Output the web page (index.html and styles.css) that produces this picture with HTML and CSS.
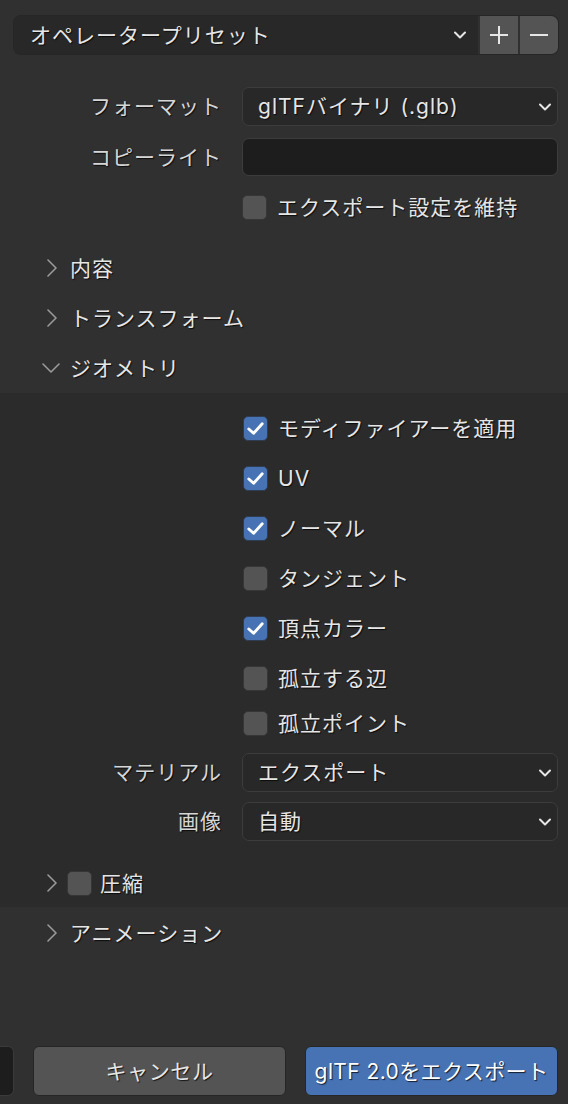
FILE: index.html
```html
<!DOCTYPE html>
<html lang="ja">
<head>
  <meta charset="UTF-8">
  <title>glTF 2.0 エクスポート</title>
  <link rel="stylesheet" href="styles.css">
</head>
<body>

<div class="preset">
  <div class="preset-select">
    <span>オペレータープリセット</span>
    <svg class="chev-down" width="12" height="8" viewBox="0 0 12 8"><polyline points="1,1.5 6,6.5 11,1.5"/></svg>
  </div>
  <div class="preset-btn">
    <svg width="20" height="20" viewBox="0 0 20 20"><line x1="10" y1="1" x2="10" y2="19"/><line x1="1" y1="10" x2="19" y2="10"/></svg>
  </div>
  <div class="preset-btn last">
    <svg width="20" height="20" viewBox="0 0 20 20"><line x1="1" y1="10" x2="19" y2="10"/></svg>
  </div>
</div>

<div class="props">
  <div class="prop">
    <span class="prop-label">フォーマット</span>
    <div class="select">
      <span>glTFバイナリ (.glb)</span>
      <svg class="chev-down" width="12" height="8" viewBox="0 0 12 8"><polyline points="1,1.5 6,6.5 11,1.5"/></svg>
    </div>
  </div>
  <div class="prop">
    <span class="prop-label">コピーライト</span>
    <div class="textfield"></div>
  </div>
  <div class="check-row">
    <span class="box"></span>
    <span>エクスポート設定を維持</span>
  </div>
</div>

<div class="header">
  <svg class="chev-right" width="10" height="18" viewBox="0 0 10 18"><polyline points="1,1 9,9 1,17"/></svg>
  <span>内容</span>
</div>
<div class="header">
  <svg class="chev-right" width="10" height="18" viewBox="0 0 10 18"><polyline points="1,1 9,9 1,17"/></svg>
  <span>トランスフォーム</span>
</div>
<div class="header open">
  <svg class="chev-open" width="18" height="10" viewBox="0 0 18 10"><polyline points="1,1 9,9 17,1"/></svg>
  <span>ジオメトリ</span>
</div>

<div class="subpanel">
  <div class="check-row geo">
    <span class="box on"><svg viewBox="0 0 24 24"><polyline points="5,12.5 10,17 19,7"/></svg></span>
    <span>モディファイアーを適用</span>
  </div>
  <div class="check-row geo">
    <span class="box on"><svg viewBox="0 0 24 24"><polyline points="5,12.5 10,17 19,7"/></svg></span>
    <span>UV</span>
  </div>
  <div class="check-row geo">
    <span class="box on"><svg viewBox="0 0 24 24"><polyline points="5,12.5 10,17 19,7"/></svg></span>
    <span>ノーマル</span>
  </div>
  <div class="check-row geo">
    <span class="box"></span>
    <span>タンジェント</span>
  </div>
  <div class="check-row geo">
    <span class="box on"><svg viewBox="0 0 24 24"><polyline points="5,12.5 10,17 19,7"/></svg></span>
    <span>頂点カラー</span>
  </div>
  <div class="check-row geo">
    <span class="box"></span>
    <span>孤立する辺</span>
  </div>
  <div class="check-row geo short">
    <span class="box"></span>
    <span>孤立ポイント</span>
  </div>

  <div class="prop tight">
    <span class="prop-label">マテリアル</span>
    <div class="select">
      <span>エクスポート</span>
      <svg class="chev-down" width="12" height="8" viewBox="0 0 12 8"><polyline points="1,1.5 6,6.5 11,1.5"/></svg>
    </div>
  </div>
  <div class="prop tight">
    <span class="prop-label">画像</span>
    <div class="select">
      <span>自動</span>
      <svg class="chev-down" width="12" height="8" viewBox="0 0 12 8"><polyline points="1,1.5 6,6.5 11,1.5"/></svg>
    </div>
  </div>

  <div class="header sub">
    <svg class="chev-right" width="10" height="18" viewBox="0 0 10 18"><polyline points="1,1 9,9 1,17"/></svg>
    <span class="box"></span>
    <span>圧縮</span>
  </div>
</div>

<div class="header anim">
  <svg class="chev-right" width="10" height="18" viewBox="0 0 10 18"><polyline points="1,1 9,9 1,17"/></svg>
  <span>アニメーション</span>
</div>

<div class="footer">
  <div class="btn stub"></div>
  <div class="btn">キャンセル</div>
  <div class="btn primary">glTF 2.0をエクスポート</div>
</div>

</body>
</html>
```

FILE: styles.css
```css
body {
  margin: 0;
  min-height: 100vh;
  display: flex;
  flex-direction: column;
  background-color: #303030;
  color: #e6e6e6;
  font-family: "Inter", "Noto Sans CJK JP", sans-serif;
  font-size: 21px;
  letter-spacing: 1px;
  line-height: 1;
  text-shadow: 1px 1px 1px rgba(0,0,0,0.75);
}
svg {
  fill: none;
  stroke-linecap: round;
  stroke-linejoin: round;
}

/* preset row */
.preset {
  display: flex;
  height: 38px;
  margin: 16px 10px 0 14px;
  border-radius: 7px;
  box-shadow: 0 0 0 1px #262626;
  overflow: hidden;
}
.preset-select {
  flex: 1;
  display: flex;
  align-items: center;
  justify-content: space-between;
  padding: 0 12px 0 16px;
  background-color: #282828;
}
.preset-btn {
  width: 38px;
  display: flex;
  align-items: center;
  justify-content: center;
  background-color: #545454;
  margin-left: 2px;
}
.preset-btn svg {
  stroke: #e6e6e6;
  stroke-width: 2;
  stroke-linecap: butt;
}
.chev-down {
  stroke: #e6e6e6;
  stroke-width: 2;
}

/* properties */
.props {
  padding-top: 33px;
}
.prop {
  display: flex;
  align-items: center;
  margin-bottom: 12px;
}
.prop.tight {
  margin-bottom: 10px;
}
.prop-label {
  width: 222px;
  margin-right: 20px;
  text-align: right;
  color: #d6d6d6;
}
.select, .textfield {
  flex: 1;
  height: 37px;
  margin-right: 10px;
  border: 1px solid #3c3c3c;
  border-radius: 7px;
}
.select {
  display: flex;
  align-items: center;
  justify-content: space-between;
  padding: 0 6px 0 15px;
  background-color: #282828;
}
.textfield {
  height: 36px;
  background-color: #1d1d1d;
}

.check-row {
  display: flex;
  align-items: center;
  gap: 10px;
  height: 38px;
  padding-left: 242px;
}
.check-row.geo {
  height: 50px;
  padding-left: 243px;
}
.check-row.geo.short {
  height: 40px;
  margin-bottom: 10px;
}
.box {
  width: 23px;
  height: 23px;
  flex-shrink: 0;
  border: 1px solid #363636;
  border-radius: 5px;
  background-color: #545454;
  display: flex;
}
.box.on {
  background-color: #4772b3;
  border-color: #2f3d52;
}
.box svg {
  width: 23px;
  height: 23px;
  stroke: #ffffff;
  stroke-width: 3;
}

/* panel headers */
.header {
  display: flex;
  align-items: center;
  height: 50px;
  padding-left: 47px;
}
.props + .header {
  margin-top: 17px;
}
.header.open {
  padding-left: 42px;
}
.chev-right {
  stroke: #9a9a9a;
  stroke-width: 1.6;
  margin-right: 13px;
}
.chev-open {
  stroke: #9a9a9a;
  stroke-width: 1.6;
  margin-right: 10px;
}
.header.sub {
  height: 48px;
  margin-top: 18px;
}
.header.sub .chev-right {
  margin-right: 10px;
}
.header.sub .box {
  margin-right: 8px;
}
.header.anim {
  height: 52px;
}

.subpanel {
  background-color: #2b2b2b;
  padding-top: 10px;
}

/* footer buttons */
.footer {
  margin-top: auto;
  display: flex;
  gap: 19px;
  padding: 0 10px 8px 0;
}
.btn {
  flex: 1;
  height: 48px;
  display: flex;
  align-items: center;
  justify-content: center;
  border: 1px solid #262626;
  border-radius: 6px;
  background-color: #545454;
  letter-spacing: 0.6px;
}
.btn.stub {
  flex: 0 0 13px;
  border-radius: 0 6px 6px 0;
  border-left: none;
  background-color: #1d1d1d;
  border-color: #3a3a3a;
}
.btn.primary {
  background-color: #4772b3;
  color: #ffffff;
  letter-spacing: 0.4px;
}
```
